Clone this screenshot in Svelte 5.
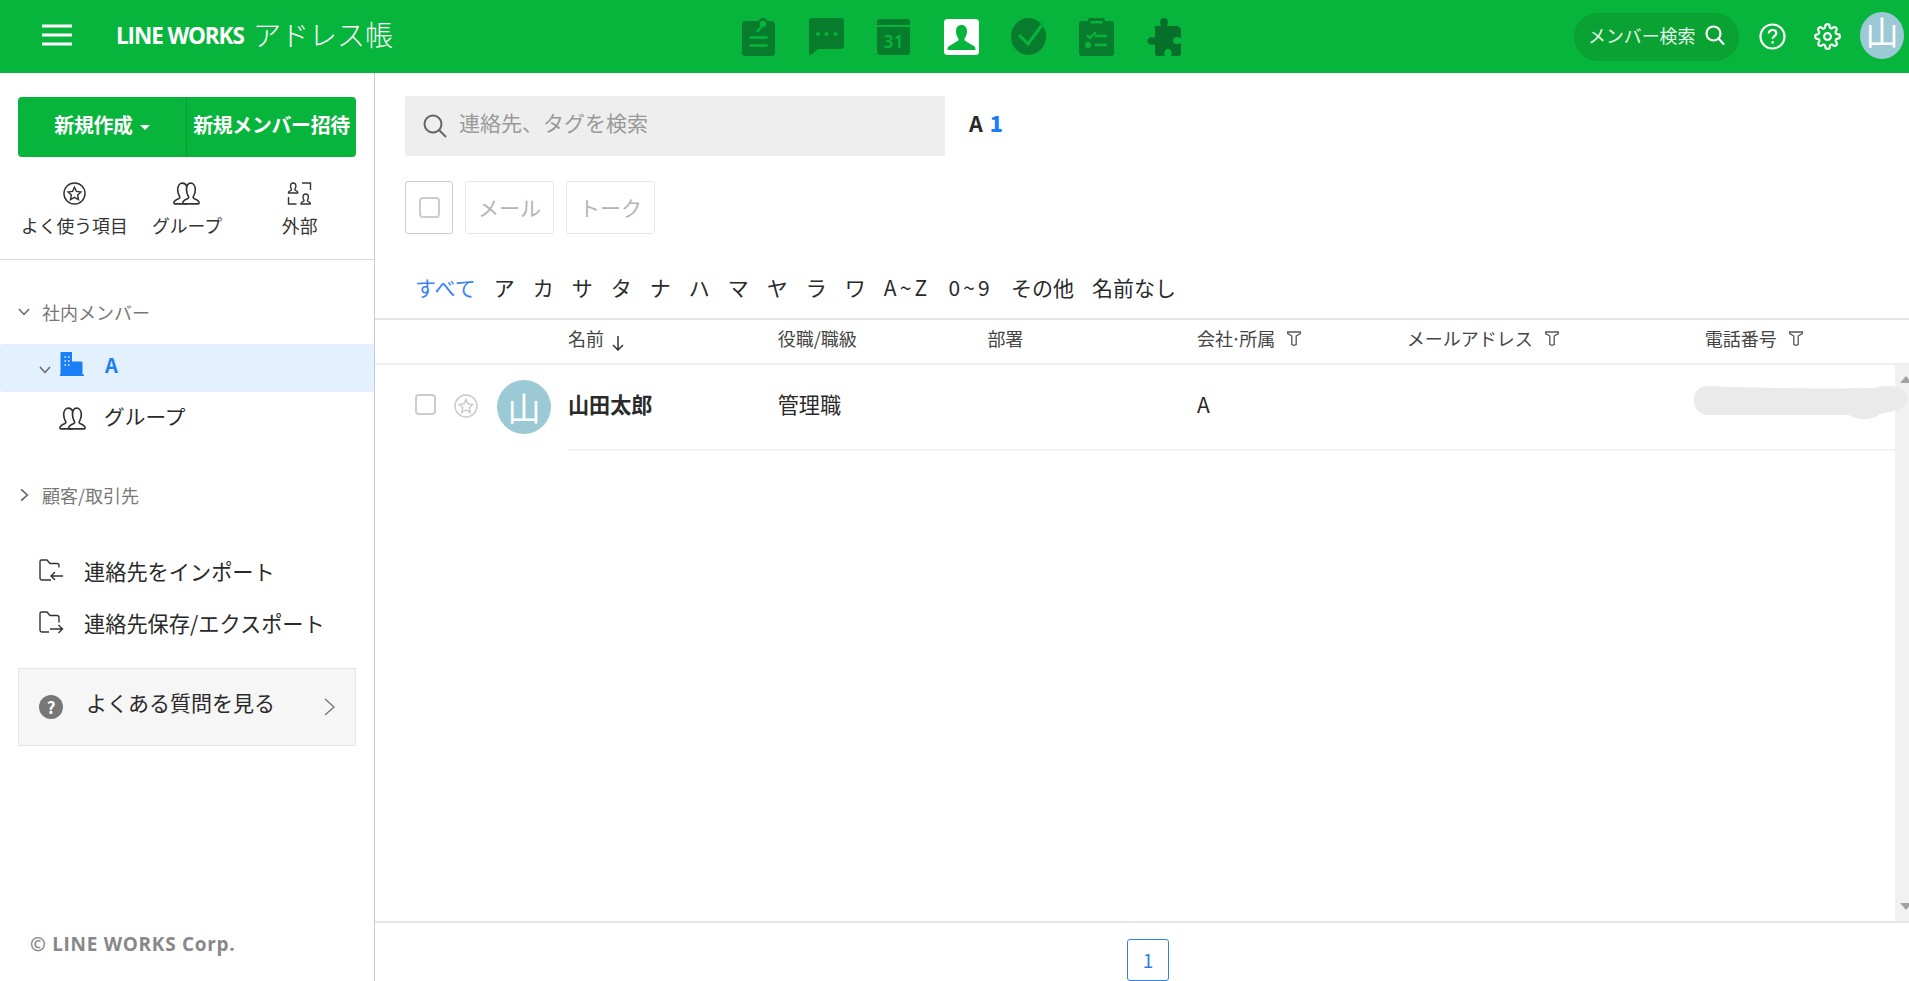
<script lang="ts">
	const kana = ['ア', 'カ', 'サ', 'タ', 'ナ', 'ハ', 'マ', 'ヤ', 'ラ', 'ワ'];
</script>

{#snippet people(cls: string)}
	<svg class={cls} viewBox="0 0 26 22" fill="none" stroke="#333" stroke-width="1.6">
		<path d="M13 21H1.8c-.6 0-.9-.4-.9-1 0-2 2-3 4.5-4 1.2-.5 1.5-1.3.9-2.3-1-1.7-1.8-3.7-1.8-6.2C4.5 3.5 6.5 1 9 1c2 0 3.6 1.2 4.3 3.2" />
		<path d="M10.5 21h13.7c.6 0 .9-.4.9-1 0-2-2-3-4.5-4-1.2-.5-1.5-1.3-.9-2.3 1-1.7 1.8-3.7 1.8-6.2 0-4-2-6.5-4.5-6.5S13 3.5 13 7.5c0 2.5.8 4.5 1.8 6.2.6 1 .3 1.8-.9 2.3-2.5 1-4.5 2-4.5 4 0 .6.3 1 .9 1" />
	</svg>
{/snippet}

{#snippet funnel()}
	<svg class="funnel" viewBox="0 0 14 15" fill="none" stroke="#555" stroke-width="1.3">
		<path d="M.7 1h12.6v1.6L9.2 5v8.5L7 14.3 4.8 13.5V5L.7 2.6z" />
	</svg>
{/snippet}

<div class="page">
	<header class="top">
		<button class="burger" aria-label="メニュー">
			<svg viewBox="0 0 30 22" fill="none" stroke="#fff" stroke-width="3">
				<path d="M0 2h30M0 11h30M0 20h30" />
			</svg>
		</button>
		<div class="logo">LINE WORKS</div>
		<div class="title">アドレス帳</div>

		<nav class="apps">
			<span class="app">
				<svg width="33" height="38" viewBox="0 0 33 38">
					<circle cx="21" cy="5" r="5" fill="#067c2c" />
					<rect y="3" width="33" height="35" rx="3.5" fill="#067c2c" />
					<circle cx="21" cy="6" r="3.2" fill="#08b53c" />
					<path d="M20 8l-5 6" stroke="#08b53c" stroke-width="2.4" />
					<path d="M7.5 19.5h18M7.5 27.5h18" stroke="#08b53c" stroke-width="2.6" />
				</svg>
			</span>
			<span class="app">
				<svg width="35" height="37" viewBox="0 0 35 37">
					<path d="M3 0h29a3 3 0 0 1 3 3v25a3 3 0 0 1-3 3H9l-7 6c-1 .5-2 0-2-1V3a3 3 0 0 1 3-3z" fill="#067c2c" />
					<circle cx="9" cy="16" r="2" fill="#08b53c" />
					<circle cx="17.5" cy="16" r="2" fill="#08b53c" />
					<circle cx="26.500" cy="16" r="2" fill="#08b53c" />
				</svg>
			</span>
			<span class="app">
				<svg width="33" height="36" viewBox="0 0 33 36">
					<path d="M3 0h27a3 3 0 0 1 3 3v3H0V3a3 3 0 0 1 3-3zM0 8h33v25a3 3 0 0 1-3 3H3a3 3 0 0 1-3-3z" fill="#067c2c" />
					<text x="16.500" y="29" text-anchor="middle" class="cal">31</text>
				</svg>
			</span>
			<span class="app">
				<svg width="35" height="36" viewBox="0 0 35 36">
					<rect width="35" height="36" rx="3.500" fill="#fff" />
					<path d="M17.500 6c-3.600 0-5.500 2.600-5.500 6 0 3 .8 5.500 2.300 7.400.7 1 .3 2-.8 2.700L4.500 27.500c-.7.500-1 1.500-1 3.500h28c0-2-.3-3-1-3.500l-9-5.400c-1.100-.7-1.500-1.700-.8-2.700C22.200 17.500 23 15 23 12c0-3.400-1.900-6-5.500-6z" fill="#08b53c" />
				</svg>
			</span>
			<span class="app">
				<svg width="35" height="37" viewBox="0 0 35 37">
					<ellipse cx="17.500" cy="18.500" rx="17.500" ry="18.500" fill="#067c2c" />
					<path d="M8 17l9 9L31 7" fill="none" stroke="#08b53c" stroke-width="3" />
				</svg>
			</span>
			<span class="app">
				<svg width="35" height="38" viewBox="0 0 35 38">
					<path d="M9 3V2a2 2 0 0 1 2-2h13a2 2 0 0 1 2 2v1h6a3 3 0 0 1 3 3v29a3 3 0 0 1-3 3H3a3 3 0 0 1-3-3V6a3 3 0 0 1 3-3z" fill="#067c2c" />
					<rect x="11.500" y="3" width="12" height="2.500" fill="#08b53c" />
					<path d="M8 17l3 3 6-6" fill="none" stroke="#08b53c" stroke-width="2.400" />
					<path d="M16 18h12M16 27h12" stroke="#08b53c" stroke-width="2.600" />
					<circle cx="9" cy="27" r="3" fill="#08b53c" />
				</svg>
			</span>
			<span class="app puzzle">
				<svg width="38" height="38" viewBox="0 0 38 38">
					<path d="M8 8h9c1 0 1-1 .5-2C16 3 18 0 21 0s5 3 3.500 6c-.5 1-.5 2 .5 2h8a5 5 0 0 1 5 3.500v7.500c0 1-1 1-2 .5-3-1.500-6 0-6 3s3 4.500 6 3c1-.5 2-.5 2 .5V35a3 3 0 0 1-3 3h-6c-1 0-1-1-.5-1.500 1-3-1-5.500-3.500-5.500s-4.500 2.500-3.500 5.500c.5.500.5 1.500-.5 1.500h-6a3 3 0 0 1-3-3v-8c0-1-1-1-2-.5-3 1-5.500-1-5.500-3.500s2.500-4.500 5.500-3.500c1 .5 2 .5 2-.5v-8a3 3 0 0 1 0-3z" fill="#06702a" />
				</svg>
			</span>
		</nav>

		<div class="tools">
			<div class="member-search">
				<span>メンバー検索</span>
				<svg width="20" height="21" viewBox="0 0 20 21" fill="none" stroke="#fff" stroke-width="2.200">
					<circle cx="8.500" cy="8.500" r="7" />
					<path d="M13.500 13.500l5.500 6" />
				</svg>
			</div>
			<svg class="tool-icon" width="27" height="27" viewBox="0 0 27 27" fill="none" stroke="#fff" stroke-width="2.200">
				<circle cx="13.500" cy="13.500" r="12" />
				<path d="M9.800 10.600c0-2.300 1.700-3.600 3.800-3.600s3.700 1.300 3.700 3.200c0 2.900-3.700 2.900-3.700 5.600" />
				<path d="M13.600 18v2.500" />
			</svg>
			<svg class="tool-icon gear" width="27" height="27" viewBox="0 0 24 24" fill="none" stroke="#fff" stroke-width="1.900">
				<circle cx="12" cy="12" r="3" />
				<path d="M19.400 15a1.650 1.650 0 0 0 .33 1.820l.06.06a2 2 0 1 1-2.830 2.830l-.06-.06a1.650 1.650 0 0 0-2.820 1.170V21a2 2 0 0 1-4 0v-.09A1.650 1.650 0 0 0 7.260 19.740l-.06.06a2 2 0 1 1-2.830-2.830l.06-.06a1.650 1.650 0 0 0-1.170-2.820H3a2 2 0 0 1 0-4h.09A1.650 1.650 0 0 0 4.260 7.260l-.06-.06a2 2 0 1 1 2.830-2.830l.06.06a1.650 1.650 0 0 0 2.820-1.170V3a2 2 0 0 1 4 0v.09a1.650 1.650 0 0 0 2.820 1.170l.06-.06a2 2 0 1 1 2.830 2.830l-.06.06a1.650 1.650 0 0 0 1.170 2.820H21a2 2 0 0 1 0 4h-.09a1.650 1.650 0 0 0-1.510 1.090z" />
			</svg>
			<div class="me">山</div>
		</div>
	</header>

	<div class="body">
		<aside class="side">
			<div class="actions">
				<button class="new"><span>新規作成</span><i class="caret"></i></button>
				<button class="invite"><span>新規メンバー招待</span></button>
			</div>

			<div class="shortcuts">
				<div class="shortcut">
					<svg class="sc-icon" viewBox="0 0 24 24" fill="none" stroke="#333" stroke-width="1.500">
						<circle cx="12" cy="12" r="11" />
						<path d="M12 5.500l2 4.300 4.700.6-3.400 3.200.9 4.700-4.200-2.300-4.200 2.300.9-4.700-3.400-3.200 4.700-.6z" />
					</svg>
					<span>よく使う項目</span>
				</div>
				<div class="shortcut">
					{@render people('sc-icon')}
					<span>グループ</span>
				</div>
				<div class="shortcut">
					<svg class="sc-icon" viewBox="0 0 24 23" fill="none" stroke="#333" stroke-width="1.400">
						<path d="M14.500 1H23v7M1 15v7h8" />
						<path d="M1 11h9c.3 0 .4-.2.4-.6 0-1-1-1.500-2.400-2-.7-.3-.8-.8-.5-1.300.6-.8.900-1.800.900-3C8.400 2.200 7.300 1 5.700 1S3 2.200 3 4.100c0 1.200.3 2.200.900 3 .3.500.2 1-.5 1.300-1.400.5-2.400 1-2.400 2 0 .4 0 .6 0 .6z" />
						<path d="M13 22h9.500c.3 0 .4-.2.4-.6 0-1-1-1.500-2.400-2-.7-.3-.8-.8-.5-1.300.6-.8.900-1.800.900-3 0-1.900-1.100-3.100-2.700-3.100s-2.700 1.200-2.700 3.100c0 1.200.3 2.200.900 3 .3.500.2 1-.5 1.300-1.400.5-2.400 1-2.400 2 0 .4 0 .6 0 .6z" />
					</svg>
					<span>外部</span>
				</div>
			</div>

			<div class="tree">
				<div class="section">
					<svg class="chev" viewBox="0 0 12 8" fill="none" stroke="#666" stroke-width="1.500"><path d="M1 1l5 5.500L11 1" /></svg>
					<span>社内メンバー</span>
				</div>
				<div class="node current">
					<svg class="chev" viewBox="0 0 12 8" fill="none" stroke="#666" stroke-width="1.500"><path d="M1 1l5 5.500L11 1" /></svg>
					<svg class="building" width="24" height="24" viewBox="0 0 24 24">
						<path d="M1.500 0H12v9.500h9.500a1 1 0 0 1 1 1V22.500H24V24H0v-1.500h.5V1a1 1 0 0 1 1-1z" fill="#1a7ff5" />
						<path d="M4.500 5h1.600M8 5h1.600M4.500 9h1.600M8 9h1.600M4.500 13h1.600M8 13h1.600" stroke="#e3f0fd" stroke-width="1.600" />
					</svg>
					<span class="org">A</span>
				</div>
				<div class="node">
					{@render people('group-icon')}
					<span>グループ</span>
				</div>
				<div class="section customers">
					<svg class="chev-r" viewBox="0 0 8 12" fill="none" stroke="#666" stroke-width="1.500"><path d="M1 1l5.500 5L1 11" /></svg>
					<span>顧客/取引先</span>
				</div>
			</div>

			<div class="links">
				<div class="link">
					<svg width="25" height="24" viewBox="0 0 25 24" fill="none" stroke="#333" stroke-width="1.400">
						<path d="M12 21H3a2 2 0 0 1-2-2V2.500A1.500 1.500 0 0 1 2.500 1H8l3 3.500h7a2 2 0 0 1 2 2v2" />
						<path d="M24 17H12M16 13l-4 4 4 4" />
					</svg>
					<span>連絡先をインポート</span>
				</div>
				<div class="link">
					<svg width="25" height="24" viewBox="0 0 25 24" fill="none" stroke="#333" stroke-width="1.400">
						<path d="M10 21H3a2 2 0 0 1-2-2V2.500A1.500 1.500 0 0 1 2.500 1H8l3 3.500h7a2 2 0 0 1 2 2v5" />
						<path d="M11 18h12M19.500 14l4 4-4 4" />
					</svg>
					<span>連絡先保存/エクスポート</span>
				</div>
			</div>

			<div class="faq">
				<span class="faq-q">?</span>
				<span class="faq-text">よくある質問を見る</span>
				<svg class="faq-chev" width="11" height="18" viewBox="0 0 11 18" fill="none" stroke="#777" stroke-width="1.400"><path d="M1 1l9 8-9 8" /></svg>
			</div>

			<div class="copy">© LINE WORKS Corp.</div>
		</aside>

		<main class="content">
			<div class="search-row">
				<div class="search">
					<svg width="24" height="24" viewBox="0 0 24 24" fill="none" stroke="#666" stroke-width="2">
						<circle cx="10" cy="10" r="8.500" />
						<path d="M16 16l7 7" />
					</svg>
					<span>連絡先、タグを検索</span>
				</div>
				<div class="crumb">A <b>1</b></div>
			</div>

			<div class="toolbar">
				<div class="tool first"><i class="check"></i></div>
				<div class="tool text"><span>メール</span></div>
				<div class="tool text"><span>トーク</span></div>
			</div>

			<div class="filter">
				<span class="on">すべて</span>
				{#each kana as k}
					<span>{k}</span>
				{/each}
				<span class="latin">A~Z</span>
				<span class="latin">0~9</span>
				<span>その他</span>
				<span>名前なし</span>
			</div>

			<div class="thead">
				<div class="lead"></div>
				<div class="col">名前
					<svg class="arrow" width="12" height="15" viewBox="0 0 12 15" fill="none" stroke="#333" stroke-width="1.500"><path d="M6 0v14M1 9l5 5 5-5" /></svg>
				</div>
				<div class="col">役職/職級</div>
				<div class="col">部署</div>
				<div class="col">会社<span class="dot">·</span>所属 {@render funnel()}</div>
				<div class="col mail">メールアドレス {@render funnel()}</div>
				<div class="col last">電話番号 {@render funnel()}</div>
			</div>

			<div class="scroller">
				<div class="rows">
					<div class="row">
						<div class="lead">
							<i class="check"></i>
							<svg class="star" width="24" height="24" viewBox="0 0 24 24" fill="none" stroke="#c8c8c8" stroke-width="1.400">
								<circle cx="12" cy="12" r="11" />
								<path d="M12 5.500l2 4.300 4.700.6-3.400 3.200.9 4.700-4.200-2.300-4.200 2.300.9-4.700-3.400-3.200 4.700-.6z" />
							</svg>
							<div class="avatar">山</div>
						</div>
						<div class="cells">
							<div class="col name">山田太郎</div>
							<div class="col">管理職</div>
							<div class="col"></div>
							<div class="col">A</div>
							<div class="col mail"></div>
							<div class="col last"></div>
						</div>
					</div>
				</div>
				<div class="scrollbar">
					<i class="up"></i>
					<i class="down"></i>
				</div>
				<svg class="blur" width="215" height="34" viewBox="0 0 215 34">
					<path d="M15 0c40 2 130 3 165 2 10-3 30-4 33 8 3 9-8 16-28 18-4 6-22 7-30 1H14C4 28 0 22 0 14 0 6 5 0 15 0z" fill="#eaeaea" />
				</svg>
			</div>

			<div class="pager">
				<span class="page-no">1</span>
			</div>
		</main>
	</div>
</div>

<style>
	:global(body) {
		margin: 0;
		background: #fff;
	}

	.page {
		width: 1909px;
		height: 981px;
		display: flex;
		flex-direction: column;
		overflow: hidden;
		font-family: "Noto Sans CJK JP", "Noto Sans", sans-serif;
		font-size: 20.7px;
		color: #2a2a2a;
	}

	.top {
		flex: 0 0 73px;
		background: #08b53c;
		display: flex;
		align-items: center;
		color: #fff;
	}

	.burger {
		width: 30px;
		height: 22px;
		margin: -3px 0 0 42px;
		padding: 0;
		border: 0;
		background: none;
		display: flex;
	}

	.logo {
		margin: -2px 0 0 44px;
		width: 131px;
		font-family: "Open Sans", sans-serif;
		font-weight: 700;
		font-size: 22.5px;
		letter-spacing: -1.1px;
		white-space: nowrap;
	}

	.title {
		margin: -6px 0 0 6px;
		font-size: 28px;
		font-weight: 300;
		white-space: nowrap;
		line-height: 1;
	}

	.apps {
		position: absolute;
		left: 725px;
		top: 0;
		height: 73px;
		display: flex;
		align-items: center;
	}

	.app {
		width: 67.5px;
		display: flex;
		justify-content: center;
	}

	.puzzle {
		padding-right: 4px;
		box-sizing: border-box;
	}

	.cal {
		fill: #08b53c;
		font-size: 18px;
		font-family: "Open Sans", sans-serif;
		font-weight: 600;
	}

	.tools {
		margin-left: auto;
		display: flex;
		align-items: center;
	}

	.member-search {
		width: 165px;
		height: 48px;
		box-sizing: border-box;
		padding-left: 14px;
		border-radius: 24px;
		background: #09a233;
		display: flex;
		align-items: center;
		gap: 10px;
		font-size: 17.9px;
		color: #e4f7ea;
		white-space: nowrap;
	}

	.member-search span {
		padding-bottom: 4px;
	}

	.member-search svg {
		margin-top: -2px;
	}

	.tool-icon {
		margin-left: 20px;
	}

	.gear {
		margin-left: 28px;
	}

	.me {
		width: 44px;
		height: 47px;
		margin: -3px 5px 0 19px;
		padding-bottom: 8px;
		box-sizing: border-box;
		border-radius: 50%;
		background: #9cc9d6;
		display: flex;
		align-items: center;
		justify-content: center;
		font-size: 33px;
		line-height: 1;
		color: #fff;
	}

	.body {
		flex: 1;
		min-height: 0;
		display: flex;
	}

	.side {
		flex: 0 0 374px;
		border-right: 1px solid #c9c9c9;
		display: flex;
		flex-direction: column;
	}

	.actions {
		margin: 24px 18px 0;
		height: 60px;
		display: flex;
		border-radius: 4px;
		overflow: hidden;
		background: #08b53c;
	}

	.actions button {
		border: 0;
		padding: 0 0 6px;
		background: none;
		color: #fff;
		font: 700 19.9px "Noto Sans CJK JP", sans-serif;
		letter-spacing: -0.3px;
		white-space: nowrap;
	}

	.new {
		width: 169px;
		border-right: 1px solid #079c34 !important;
	}

	.invite {
		flex: 1;
	}

	.caret {
		display: inline-block;
		margin-left: 7px;
		vertical-align: 3px;
		border: 5px solid transparent;
		border-top-color: #fff;
		border-bottom: 0;
	}

	.shortcuts {
		margin: 25px 18px 0;
		height: 77px;
		display: grid;
		grid-template-columns: repeat(3, 1fr);
		font-size: 17.8px;
		color: #333;
	}

	.shortcut {
		display: flex;
		flex-direction: column;
		align-items: center;
		white-space: nowrap;
	}

	.sc-icon {
		width: 27px;
		height: 23px;
	}

	.shortcut span {
		margin-top: 6px;
		line-height: 28px;
	}

	.tree {
		border-top: 1px solid #ddd;
		padding-top: 31px;
	}

	.section {
		height: 42px;
		display: flex;
		align-items: center;
		font-size: 18px;
		color: #777;
		padding-left: 18px;
	}

	.chev {
		width: 12px;
		height: 8px;
		margin-right: 12px;
		flex: none;
	}

	.chev-r {
		width: 9px;
		height: 14px;
		margin: 0 13px 0 2px;
		flex: none;
	}

	.customers {
		margin-top: 31.5px;
	}

	.node {
		height: 48px;
		display: flex;
		align-items: center;
		padding-left: 59px;
		white-space: nowrap;
	}

	.node span {
		margin-left: 18px;
		padding-bottom: 4px;
	}

	.current {
		margin-top: 11px;
		padding-left: 39px;
		background: #e3f0fd;
		border-radius: 3px;
		margin-bottom: 2px;
	}

	.current .chev {
		margin: 4px 9px 0 0;
	}

	.current .org {
		margin-left: 21px;
		padding-bottom: 7px;
		font-weight: 700;
		color: #1a7ff5;
		font-size: 20px;
	}

	.building {
		margin-top: -8px;
	}

	.group-icon {
		width: 27px;
		height: 23px;
	}

	.links {
		margin-top: 29px;
		padding-left: 39px;
		font-size: 21.2px;
	}

	.link {
		height: 52px;
		display: flex;
		align-items: center;
		gap: 20px;
		white-space: nowrap;
	}

	.faq {
		margin: 19.5px 18px 0;
		height: 78px;
		box-sizing: border-box;
		border: 1px solid #e6e6e6;
		background: #f6f6f6;
		display: flex;
		align-items: center;
		padding: 0 20px;
	}

	.faq-q {
		flex: none;
		width: 24px;
		height: 24px;
		border-radius: 50%;
		background: #777;
		color: #fff;
		font-size: 17px;
		font-weight: 700;
		line-height: 24px;
		text-align: center;
	}

	.faq-text {
		margin: -10px 0 0 23px;
		white-space: nowrap;
		font-size: 21px;
	}

	.faq-chev {
		margin-left: auto;
	}

	.copy {
		margin: auto 0 24px 30px;
		font: 700 19px "Open Sans", sans-serif;
		letter-spacing: 0.7px;
		color: #888;
		white-space: nowrap;
	}

	.content {
		flex: 1;
		min-width: 0;
		display: flex;
		flex-direction: column;
	}

	.search-row {
		margin: 23px 0 0 30px;
		display: flex;
		align-items: center;
	}

	.search {
		width: 540px;
		height: 60px;
		box-sizing: border-box;
		padding-left: 18px;
		background: #eee;
		border-radius: 2px;
		display: flex;
		align-items: center;
		gap: 12px;
		color: #999;
		font-size: 21px;
	}

	.search span {
		margin-top: -8px;
	}

	.crumb {
		margin: -7px 0 0 24px;
		font-weight: 700;
		font-size: 21.5px;
		word-spacing: 2px;
	}

	.crumb b {
		color: #1a7ff5;
	}

	.toolbar {
		margin: 25px 0 0 30px;
		height: 53px;
		display: flex;
		gap: 12px;
	}

	.tool {
		height: 53px;
		box-sizing: border-box;
		border: 1px solid #e6e6e6;
		border-radius: 3px;
		display: flex;
		align-items: center;
		justify-content: center;
		color: #b5b5b5;
		font-size: 21px;
	}

	.tool span {
		padding-bottom: 2px;
	}

	.tool.first {
		width: 48px;
		border-color: #ccc;
	}

	.tool.text {
		width: 89px;
	}

	.check {
		display: block;
		flex: none;
		width: 21px;
		height: 21px;
		box-sizing: border-box;
		border: 2px solid #ccc;
		border-radius: 4px;
		background: #fff;
	}

	.filter {
		margin: 38px 0 0 40px;
		height: 31px;
		display: flex;
		align-items: center;
		gap: 18px;
		font-size: 21px;
		line-height: 31px;
		white-space: nowrap;
	}

	.filter .on {
		color: #3a82f7;
	}

	.filter .latin {
		letter-spacing: 3.2px;
	}

	.thead {
		margin-top: 15px;
		height: 47px;
		box-sizing: border-box;
		padding-bottom: 7px;
		border-top: 2px solid #e6e6e6;
		border-bottom: 2px solid #efefef;
		display: flex;
		align-items: center;
		font-size: 18px;
		color: #444;
	}

	.lead {
		flex: 0 0 193px;
		box-sizing: border-box;
		display: flex;
		align-items: center;
	}

	.col {
		flex: 0 0 209.700px;
		display: flex;
		align-items: center;
		white-space: nowrap;
	}

	.col.mail {
		flex-basis: 298px;
	}

	.col.last {
		flex: 0 1 auto;
	}

	.dot {
		margin: 0 -2px;
	}

	.arrow {
		margin: 10px 0 0 8px;
	}

	.funnel {
		width: 14px;
		height: 15px;
		margin: 1px 0 0 12px;
	}

	.scroller {
		position: relative;
		flex: 1;
		min-height: 0;
		display: flex;
		border-bottom: 2px solid #e6e6e6;
	}

	.rows {
		flex: 1;
		min-width: 0;
	}

	.row {
		display: flex;
		height: 86px;
	}

	.row .lead {
		padding: 0 0 2px 40px;
	}

	.row .check {
		margin-bottom: 6px;
	}

	.row .star {
		margin: 0 0 2px 18px;
	}

	.avatar {
		width: 54px;
		height: 54px;
		margin-left: 19px;
		border-radius: 50%;
		background: #9cc9d6;
		color: #fff;
		font-size: 33px;
		line-height: 54px;
		text-align: center;
	}

	.cells {
		flex: 1;
		min-width: 0;
		display: flex;
		border-bottom: 2px solid #f2f2f2;
		padding-bottom: 6px;
		font-size: 21.1px;
	}

	.name {
		font-weight: 700;
	}

	.scrollbar {
		flex: 0 0 14px;
		background: #f1f1f1;
		display: flex;
		flex-direction: column;
		justify-content: space-between;
		padding: 11px 0 11px;
		box-sizing: border-box;
		align-items: flex-end;
	}

	.up,
	.down {
		display: block;
		border: 6px solid transparent;
		margin-right: -3px;
	}

	.up {
		border-top: 0;
		border-bottom: 7px solid #a3a3a3;
	}

	.down {
		border-bottom: 0;
		border-top: 7px solid #a3a3a3;
	}

	/* redacted phone number painted over the last cell */
	.blur {
		position: absolute;
		right: 0;
		top: 21px;
	}

	.pager {
		flex: 0 0 57px;
		display: flex;
		justify-content: center;
		padding-left: 12px;
		padding-top: 16px;
		box-sizing: border-box;
	}

	.page-no {
		width: 42px;
		height: 42px;
		box-sizing: border-box;
		border: 1.500px solid #2c7ff0;
		border-radius: 3px;
		color: #2c7ff0;
		font-size: 19px;
		padding-bottom: 2px;
		display: flex;
		align-items: center;
		justify-content: center;
	}
</style>
